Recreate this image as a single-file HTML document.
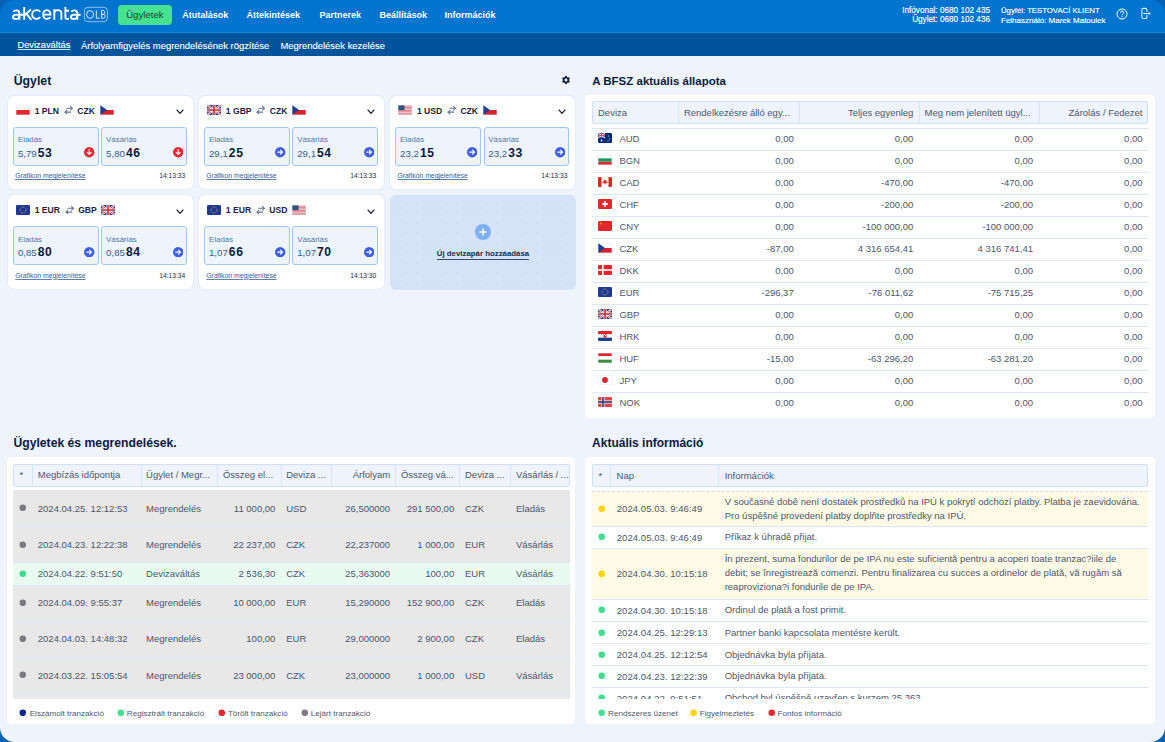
<!DOCTYPE html><html><head><meta charset="utf-8"><title>akcenta OLB</title><style>
*{box-sizing:border-box;margin:0;padding:0}
html,body{width:1165px;height:742px;overflow:hidden;background:#0663b4;font-family:"Liberation Sans", sans-serif;}
.page{position:absolute;left:0;top:0;width:1165px;height:742px;border-radius:14.5px;overflow:hidden;}
.t{position:absolute;white-space:nowrap;}
.card{position:absolute;background:#fff;border-radius:6px;box-shadow:0 0 1.5px rgba(110,140,190,0.28);}
.panel{position:absolute;background:#fff;border-radius:5px;}
</style></head><body><div class="page"><div class="t" style="left:0px;top:50px;width:1165px;height:692px;background:#eef3fc;"></div><div class="t" style="left:0px;top:0px;width:1165px;height:32.7px;background:#0074cf;"></div><div class="t" style="left:0px;top:31.7px;width:1165px;height:1px;background:#1681d6;"></div><div class="t" style="left:0px;top:32.7px;width:1165px;height:23px;background:#00549b;"></div><svg class="t" style="left:0;top:0" width="112" height="32" viewBox="0 0 112 32"><g fill="none" stroke="#fff" stroke-width="1.9"><path d="M13.4 11.8C14 10.8 15 10.4 16.3 10.4C18.4 10.4 19.4 11.4 19.4 13.3V19.8"/><path d="M24.2 14.7H16.2C14 14.7 13 15.6 13 16.9C13 18.2 14 18.9 15.7 18.9C17.9 18.9 19.4 17.6 19.4 15.4"/><path d="M24.2 7.1V19.8M24.6 15.2L31 9.5M26.6 13.9L31.3 19.8"/><path d="M40.2 12C39.4 10.8 38.1 10.1 36.5 10.1C33.9 10.1 32.2 12.1 32.2 14.5C32.2 16.9 33.9 18.9 36.5 18.9C38.1 18.9 39.4 18.2 40.2 17"/><path d="M43.2 14.6H50.5C50.5 12 48.9 10.1 46.8 10.1C44.6 10.1 43.2 12.1 43.2 14.5C43.2 16.9 44.7 18.9 47 18.9C48.5 18.9 49.6 18.3 50.3 17.2"/><path d="M54.3 19.8V9.3M54.3 13.4C54.3 11.4 55.6 10.1 57.5 10.1C59.6 10.1 61.4 11.2 61.4 13.6V19.8"/><path d="M65.4 7.1V17C65.4 18.5 66.2 18.9 67.3 18.9H69M64.5 10.8H69"/><path d="M71.3 11.8C71.9 10.8 72.9 10.4 74.2 10.4C76.3 10.4 77.3 11.4 77.3 13.3V19.8"/><path d="M80.6 14.7H74.1C71.9 14.7 70.9 15.6 70.9 16.9C70.9 18.2 71.9 18.9 73.6 18.9C75.8 18.9 77.3 17.6 77.3 15.4"/></g><rect x="84.4" y="7.3" width="23" height="14.4" rx="3.6" fill="none" stroke="rgba(255,255,255,0.55)" stroke-width="1"/><g fill="none" stroke="rgba(255,255,255,0.9)" stroke-width="0.95"><ellipse cx="90.1" cy="14.5" rx="3.5" ry="3.9"/><path d="M96.3 10.4V18.2H99.6"/><path d="M101.6 10.4V18.2H103.4C104.6 18.2 105.2 17.4 105.2 16.3C105.2 15.2 104.5 14.4 103.3 14.4H101.6M101.6 14.4H103C104 14.4 104.6 13.7 104.6 12.4C104.6 11.2 104 10.4 103 10.4H101.6"/></g></svg><div class="t" style="left:118px;top:5px;width:54px;height:20px;background:#47e28f;border-radius:4px;"></div><div class="t" style="left:126.2px;top:9.22px;font-size:9.6px;line-height:11.52px;color:#1a4236;">Ügyletek</div><div class="t" style="left:182.3px;top:9.69px;font-size:9px;line-height:10.8px;color:#fff;font-weight:bold;">Átutalások</div><div class="t" style="left:246.5px;top:9.69px;font-size:9px;line-height:10.8px;color:#fff;font-weight:bold;">Áttekintések</div><div class="t" style="left:319.4px;top:9.69px;font-size:9px;line-height:10.8px;color:#fff;font-weight:bold;">Partnerek</div><div class="t" style="left:379.6px;top:9.69px;font-size:9px;line-height:10.8px;color:#fff;font-weight:bold;">Beállítások</div><div class="t" style="left:444.4px;top:9.69px;font-size:9px;line-height:10.8px;color:#fff;font-weight:bold;">Információk</div><div class="t" style="left:590px;width:400px;text-align:right;top:5.54px;font-size:8.2px;line-height:9.84px;color:#fff;-webkit-text-stroke:0.15px #fff;">Infóvonal: 0680 102 435</div><div class="t" style="left:590px;width:400px;text-align:right;top:15.34px;font-size:8.2px;line-height:9.84px;color:#fff;-webkit-text-stroke:0.15px #fff;">Ügylet: 0680 102 436</div><div class="t" style="left:1001px;top:5.97px;font-size:7.75px;line-height:9.3px;color:#fff;-webkit-text-stroke:0.15px #fff;">Ügyfél: TESTOVACÍ KLIENT</div><div class="t" style="left:1001px;top:15.53px;font-size:8px;line-height:9.6px;color:#fff;-webkit-text-stroke:0.15px #fff;">Felhasználó: Marek Matoulek</div><svg class="t" style="left:1116px;top:8px" width="12" height="12" viewBox="0 0 12 12"><circle cx="6" cy="6" r="5" fill="none" stroke="#fff" stroke-width="1"/><path d="M4.4 4.7a1.6 1.6 0 1 1 2.3 1.4c-.5.3-.7.6-.7 1.1v.2" fill="none" stroke="#fff" stroke-width="1"/><circle cx="6" cy="8.7" r=".6" fill="#fff"/></svg><svg class="t" style="left:1140px;top:7px" width="13" height="13" viewBox="0 0 13 13"><path d="M6.9 5V2.9Q6.9 1.4 5.4 1.4H3.3Q1.8 1.4 1.8 2.9V10Q1.8 11.5 3.3 11.5H5.4Q6.9 11.5 6.9 10V8.1" fill="none" stroke="rgba(255,255,255,0.88)" stroke-width="1.1"/><path d="M3.4 6.5H9.6" stroke="rgba(255,255,255,0.9)" stroke-width="1.1"/><path d="M8.7 4.9L10.9 6.5L8.7 8.1Z" fill="#fff"/></svg><div class="t" style="left:17.4px;top:39.85px;font-size:9.35px;line-height:11.22px;color:#fff;text-decoration:underline;text-decoration-thickness:0.9px;text-decoration-color:rgba(255,255,255,0.8);text-underline-offset:0.6px;-webkit-text-stroke:0.12px #fff;">Devizaváltás</div><div class="t" style="left:81px;top:39.76px;font-size:9.45px;line-height:11.34px;color:#fff;-webkit-text-stroke:0.12px #fff;">Árfolyamfigyelés megrendelésének rögzítése</div><div class="t" style="left:280.5px;top:39.76px;font-size:9.45px;line-height:11.34px;color:#fff;-webkit-text-stroke:0.12px #fff;">Megrendelések kezelése</div><div class="t" style="left:13.7px;top:74.16px;font-size:12.3px;line-height:14.76px;color:#0d1a3b;font-weight:bold;">Ügylet</div><div class="t" style="left:592.2px;top:74.72px;font-size:11.5px;line-height:13.8px;color:#0d1a3b;font-weight:bold;">A BFSZ aktuális állapota</div><div class="t" style="left:13.4px;top:435.86px;font-size:12.2px;line-height:14.64px;color:#0d1a3b;font-weight:bold;">Ügyletek és megrendelések.</div><div class="t" style="left:592.1px;top:436.25px;font-size:12px;line-height:14.4px;color:#0d1a3b;font-weight:bold;">Aktuális információ</div><svg class="t" style="left:560.5px;top:75px" width="10" height="10" viewBox="0 0 24 24"><path fill="#0d1a3b" d="M19.14 12.94c.04-.3.06-.61.06-.94 0-.32-.02-.64-.07-.94l2.03-1.58a.49.49 0 0 0 .12-.61l-1.92-3.32a.488.488 0 0 0-.59-.22l-2.39.96c-.5-.38-1.03-.7-1.62-.94l-.36-2.54a.484.484 0 0 0-.48-.41h-3.84c-.24 0-.43.17-.47.41l-.36 2.54c-.59.24-1.130.57-1.62.94l-2.39-.96c-.22-.08-.47 0-.59.22L2.740 8.87c-.12.21-.08.47.12.61l2.03 1.58c-.05.3-.09.63-.09.94s.02.64.07.94l-2.03 1.58a.49.49 0 0 0-.12.61l1.92 3.32c.12.22.37.29.59.22l2.39-.96c.5.38 1.03.7 1.62.94l.36 2.54c.05.24.24.41.48.41h3.84c.24 0 .44-.17.47-.41l.36-2.54c.59-.24 1.13-.56 1.62-.94l2.39.96c.22.08.47 0 .59-.22l1.92-3.32c.12-.22.07-.47-.12-.61l-2.01-1.58zM12 15.6c-1.98 0-3.6-1.62-3.6-3.6s1.62-3.6 3.6-3.6 3.6 1.62 3.6 3.6-1.62 3.6-3.6 3.6z"/></svg><div class="card" style="left:8px;top:96px;width:184.6px;height:93px;"><div class="t" style="left:8px;top:9.2px;height:10px;display:flex;align-items:center;gap:4.6px;font-weight:bold;font-size:8.6px;color:#1b2440;line-height:10px;"><svg width="14" height="10" viewBox="0 0 14 10" style="display:block;flex:none;"><defs><clipPath id="fc1"><rect width="14" height="10" rx="1.3"/></clipPath></defs><g clip-path="url(#fc1)"><rect width="14" height="5" fill="#fff"/><rect y="5" width="14" height="5" fill="#e4262d"/></g><rect x=".25" y=".25" width="13.5" height="9.5" rx="1.2" fill="none" stroke="#d9e2ee" stroke-width=".5"/></svg><span style="margin-left:0.1px;position:relative;top:0.4px">1 PLN</span><svg width="9" height="10" viewBox="1 0 9 10" style="display:block;flex:none;margin-top:0.5px"><g fill="none" stroke="#6a7890" stroke-width="1.05" stroke-linecap="round" stroke-linejoin="round"><path d="M3.7 3.3H9.4M7.5 1.5L9.5 3.3L7.5 5.1"/><path d="M7.8 7.1H1.9M3.9 5.3L1.8 7.1L3.9 8.9"/></g></svg><span style="position:relative;top:0.4px">CZK</span><svg width="14" height="10" viewBox="0 0 14 10" style="display:block;flex:none;"><defs><clipPath id="fc2"><rect width="14" height="10" rx="1.3"/></clipPath></defs><g clip-path="url(#fc2)"><rect width="14" height="5" fill="#fff"/><rect y="5" width="14" height="5" fill="#d7232e"/><path d="M0 0L7 5L0 10Z" fill="#1c3f94"/></g><rect x=".25" y=".25" width="13.5" height="9.5" rx="1.2" fill="none" stroke="#d9e2ee" stroke-width=".5"/></svg></div><svg class="t" style="left:167.6px;top:13.3px" width="8" height="6" viewBox="0 0 8 6"><path d="M1 1L4 4.3L7 1" fill="none" stroke="#1b2233" stroke-width="1.15" stroke-linecap="round" stroke-linejoin="round"/></svg><div class="t" style="left:5.2px;top:31px;width:85.5px;height:39px;border:1px solid #9fc7f4;border-radius:3px;background:#eef4fd;"></div><div class="t" style="left:9.9px;top:39.33px;font-size:7.9px;line-height:9.48px;color:#5578a0;">Eladás</div><div class="t" style="left:9.9px;top:49.55px;line-height:14.52px;color:#3a5d8c;font-size:9.7px;">5,79<b style="font-size:12.1px;color:#0d1a3b;margin-left:1px;letter-spacing:0.6px;">53</b></div><svg class="t" style="left:76.4px;top:51.3px" width="10.4" height="10.4" viewBox="0 0 10.4 10.4"><circle cx="5.2" cy="5.2" r="5.2" fill="#e8262d"/><path d="M5.2 2.7V7.3M3.2 5.4L5.2 7.4L7.2 5.4" fill="none" stroke="#fff" stroke-width="1.15" stroke-linecap="round" stroke-linejoin="round"/></svg><div class="t" style="left:93.4px;top:31px;width:85.5px;height:39px;border:1px solid #9fc7f4;border-radius:3px;background:#eef4fd;"></div><div class="t" style="left:98.1px;top:39.33px;font-size:7.9px;line-height:9.48px;color:#5578a0;">Vásárlás</div><div class="t" style="left:98.1px;top:49.55px;line-height:14.52px;color:#3a5d8c;font-size:9.7px;">5,80<b style="font-size:12.1px;color:#0d1a3b;margin-left:1px;letter-spacing:0.6px;">46</b></div><svg class="t" style="left:164.6px;top:51.3px" width="10.4" height="10.4" viewBox="0 0 10.4 10.4"><circle cx="5.2" cy="5.2" r="5.2" fill="#e8262d"/><path d="M5.2 2.7V7.3M3.2 5.4L5.2 7.4L7.2 5.4" fill="none" stroke="#fff" stroke-width="1.15" stroke-linecap="round" stroke-linejoin="round"/></svg><div class="t" style="left:7.2px;top:76.22px;font-size:6.85px;line-height:8.22px;color:#35608f;text-decoration:underline;text-decoration-color:#5f82ab;text-underline-offset:0.5px;">Grafikon megjelenítése</div><div class="t" style="left:-222.8px;width:400px;text-align:right;top:76.36px;font-size:6.7px;line-height:8.04px;color:#232c3a;">14:13:33</div></div><div class="card" style="left:199.1px;top:96px;width:184.6px;height:93px;"><div class="t" style="left:8px;top:9.2px;height:10px;display:flex;align-items:center;gap:4.6px;font-weight:bold;font-size:8.6px;color:#1b2440;line-height:10px;"><svg width="14" height="10" viewBox="0 0 14 10" style="display:block;flex:none;"><defs><clipPath id="fc3"><rect width="14" height="10" rx="1.3"/></clipPath></defs><g clip-path="url(#fc3)"><rect width="14" height="10" fill="#283c8c"/><path d="M0 0L14 10M14 0L0 10" stroke="#fff" stroke-width="2"/><path d="M0 0L14 10M14 0L0 10" stroke="#d22630" stroke-width=".8"/><path d="M7 0V10M0 5H14" stroke="#fff" stroke-width="3"/><path d="M7 0V10M0 5H14" stroke="#d22630" stroke-width="1.6"/></g></svg><span style="margin-left:0.1px;position:relative;top:0.4px">1 GBP</span><svg width="9" height="10" viewBox="1 0 9 10" style="display:block;flex:none;margin-top:0.5px"><g fill="none" stroke="#6a7890" stroke-width="1.05" stroke-linecap="round" stroke-linejoin="round"><path d="M3.7 3.3H9.4M7.5 1.5L9.5 3.3L7.5 5.1"/><path d="M7.8 7.1H1.9M3.9 5.3L1.8 7.1L3.9 8.9"/></g></svg><span style="position:relative;top:0.4px">CZK</span><svg width="14" height="10" viewBox="0 0 14 10" style="display:block;flex:none;"><defs><clipPath id="fc4"><rect width="14" height="10" rx="1.3"/></clipPath></defs><g clip-path="url(#fc4)"><rect width="14" height="5" fill="#fff"/><rect y="5" width="14" height="5" fill="#d7232e"/><path d="M0 0L7 5L0 10Z" fill="#1c3f94"/></g><rect x=".25" y=".25" width="13.5" height="9.5" rx="1.2" fill="none" stroke="#d9e2ee" stroke-width=".5"/></svg></div><svg class="t" style="left:167.6px;top:13.3px" width="8" height="6" viewBox="0 0 8 6"><path d="M1 1L4 4.3L7 1" fill="none" stroke="#1b2233" stroke-width="1.15" stroke-linecap="round" stroke-linejoin="round"/></svg><div class="t" style="left:5.2px;top:31px;width:85.5px;height:39px;border:1px solid #9fc7f4;border-radius:3px;background:#eef4fd;"></div><div class="t" style="left:9.9px;top:39.33px;font-size:7.9px;line-height:9.48px;color:#5578a0;">Eladás</div><div class="t" style="left:9.9px;top:49.55px;line-height:14.52px;color:#3a5d8c;font-size:9.7px;">29,1<b style="font-size:12.1px;color:#0d1a3b;margin-left:1px;letter-spacing:0.6px;">25</b></div><svg class="t" style="left:76.4px;top:51.3px" width="10.4" height="10.4" viewBox="0 0 10.4 10.4"><circle cx="5.2" cy="5.2" r="5.2" fill="#3f5fe2"/><path d="M2.8 5.2H7.4M5.5 3.2L7.5 5.2L5.5 7.2" fill="none" stroke="#fff" stroke-width="1.15" stroke-linecap="round" stroke-linejoin="round"/></svg><div class="t" style="left:93.4px;top:31px;width:85.5px;height:39px;border:1px solid #9fc7f4;border-radius:3px;background:#eef4fd;"></div><div class="t" style="left:98.1px;top:39.33px;font-size:7.9px;line-height:9.48px;color:#5578a0;">Vásárlás</div><div class="t" style="left:98.1px;top:49.55px;line-height:14.52px;color:#3a5d8c;font-size:9.7px;">29,1<b style="font-size:12.1px;color:#0d1a3b;margin-left:1px;letter-spacing:0.6px;">54</b></div><svg class="t" style="left:164.6px;top:51.3px" width="10.4" height="10.4" viewBox="0 0 10.4 10.4"><circle cx="5.2" cy="5.2" r="5.2" fill="#3f5fe2"/><path d="M2.8 5.2H7.4M5.5 3.2L7.5 5.2L5.5 7.2" fill="none" stroke="#fff" stroke-width="1.15" stroke-linecap="round" stroke-linejoin="round"/></svg><div class="t" style="left:7.2px;top:76.22px;font-size:6.85px;line-height:8.22px;color:#35608f;text-decoration:underline;text-decoration-color:#5f82ab;text-underline-offset:0.5px;">Grafikon megjelenítése</div><div class="t" style="left:-222.8px;width:400px;text-align:right;top:76.36px;font-size:6.7px;line-height:8.04px;color:#232c3a;">14:13:33</div></div><div class="card" style="left:390.2px;top:96px;width:184.6px;height:93px;"><div class="t" style="left:8px;top:9.2px;height:10px;display:flex;align-items:center;gap:4.6px;font-weight:bold;font-size:8.6px;color:#1b2440;line-height:10px;"><svg width="14" height="10" viewBox="0 0 14 10" style="display:block;flex:none;"><defs><clipPath id="fc5"><rect width="14" height="10" rx="1.3"/></clipPath></defs><g clip-path="url(#fc5)"><rect width="14" height="10" fill="#f7dfe2"/><rect y="0.7" width="14" height=".75" fill="#d46a72"/><rect y="2.13" width="14" height=".75" fill="#d46a72"/><rect y="3.56" width="14" height=".75" fill="#d46a72"/><rect y="4.99" width="14" height=".75" fill="#d46a72"/><rect y="6.42" width="14" height=".75" fill="#d46a72"/><rect y="7.85" width="14" height=".75" fill="#d46a72"/><rect y="9.28" width="14" height=".75" fill="#d46a72"/><rect width="6.5" height="5.2" fill="#33507f"/></g><rect x=".25" y=".25" width="13.5" height="9.5" rx="1.2" fill="none" stroke="#d9e2ee" stroke-width=".5"/></svg><span style="margin-left:0.1px;position:relative;top:0.4px">1 USD</span><svg width="9" height="10" viewBox="1 0 9 10" style="display:block;flex:none;margin-top:0.5px"><g fill="none" stroke="#6a7890" stroke-width="1.05" stroke-linecap="round" stroke-linejoin="round"><path d="M3.7 3.3H9.4M7.5 1.5L9.5 3.3L7.5 5.1"/><path d="M7.8 7.1H1.9M3.9 5.3L1.8 7.1L3.9 8.9"/></g></svg><span style="position:relative;top:0.4px">CZK</span><svg width="14" height="10" viewBox="0 0 14 10" style="display:block;flex:none;"><defs><clipPath id="fc6"><rect width="14" height="10" rx="1.3"/></clipPath></defs><g clip-path="url(#fc6)"><rect width="14" height="5" fill="#fff"/><rect y="5" width="14" height="5" fill="#d7232e"/><path d="M0 0L7 5L0 10Z" fill="#1c3f94"/></g><rect x=".25" y=".25" width="13.5" height="9.5" rx="1.2" fill="none" stroke="#d9e2ee" stroke-width=".5"/></svg></div><svg class="t" style="left:167.6px;top:13.3px" width="8" height="6" viewBox="0 0 8 6"><path d="M1 1L4 4.3L7 1" fill="none" stroke="#1b2233" stroke-width="1.15" stroke-linecap="round" stroke-linejoin="round"/></svg><div class="t" style="left:5.2px;top:31px;width:85.5px;height:39px;border:1px solid #9fc7f4;border-radius:3px;background:#eef4fd;"></div><div class="t" style="left:9.9px;top:39.33px;font-size:7.9px;line-height:9.48px;color:#5578a0;">Eladás</div><div class="t" style="left:9.9px;top:49.55px;line-height:14.52px;color:#3a5d8c;font-size:9.7px;">23,2<b style="font-size:12.1px;color:#0d1a3b;margin-left:1px;letter-spacing:0.6px;">15</b></div><svg class="t" style="left:76.4px;top:51.3px" width="10.4" height="10.4" viewBox="0 0 10.4 10.4"><circle cx="5.2" cy="5.2" r="5.2" fill="#3f5fe2"/><path d="M2.8 5.2H7.4M5.5 3.2L7.5 5.2L5.5 7.2" fill="none" stroke="#fff" stroke-width="1.15" stroke-linecap="round" stroke-linejoin="round"/></svg><div class="t" style="left:93.4px;top:31px;width:85.5px;height:39px;border:1px solid #9fc7f4;border-radius:3px;background:#eef4fd;"></div><div class="t" style="left:98.1px;top:39.33px;font-size:7.9px;line-height:9.48px;color:#5578a0;">Vásárlás</div><div class="t" style="left:98.1px;top:49.55px;line-height:14.52px;color:#3a5d8c;font-size:9.7px;">23,2<b style="font-size:12.1px;color:#0d1a3b;margin-left:1px;letter-spacing:0.6px;">33</b></div><svg class="t" style="left:164.6px;top:51.3px" width="10.4" height="10.4" viewBox="0 0 10.4 10.4"><circle cx="5.2" cy="5.2" r="5.2" fill="#3f5fe2"/><path d="M2.8 5.2H7.4M5.5 3.2L7.5 5.2L5.5 7.2" fill="none" stroke="#fff" stroke-width="1.15" stroke-linecap="round" stroke-linejoin="round"/></svg><div class="t" style="left:7.2px;top:76.22px;font-size:6.85px;line-height:8.22px;color:#35608f;text-decoration:underline;text-decoration-color:#5f82ab;text-underline-offset:0.5px;">Grafikon megjelenítése</div><div class="t" style="left:-222.8px;width:400px;text-align:right;top:76.36px;font-size:6.7px;line-height:8.04px;color:#232c3a;">14:13:33</div></div><div class="card" style="left:8px;top:195.4px;width:184.6px;height:93.6px;"><div class="t" style="left:8px;top:9.2px;height:10px;display:flex;align-items:center;gap:4.6px;font-weight:bold;font-size:8.6px;color:#1b2440;line-height:10px;"><svg width="14" height="10" viewBox="0 0 14 10" style="display:block;flex:none;"><defs><clipPath id="fc7"><rect width="14" height="10" rx="1.3"/></clipPath></defs><g clip-path="url(#fc7)"><rect width="14" height="10" fill="#1d3993"/><circle cx="7" cy="5" r="3" fill="none" stroke="#d9a54a" stroke-width=".9" stroke-dasharray=".8 .77"/></g></svg><span style="margin-left:0.1px;position:relative;top:0.4px">1 EUR</span><svg width="9" height="10" viewBox="1 0 9 10" style="display:block;flex:none;margin-top:0.5px"><g fill="none" stroke="#6a7890" stroke-width="1.05" stroke-linecap="round" stroke-linejoin="round"><path d="M3.7 3.3H9.4M7.5 1.5L9.5 3.3L7.5 5.1"/><path d="M7.8 7.1H1.9M3.9 5.3L1.8 7.1L3.9 8.9"/></g></svg><span style="position:relative;top:0.4px">GBP</span><svg width="14" height="10" viewBox="0 0 14 10" style="display:block;flex:none;"><defs><clipPath id="fc8"><rect width="14" height="10" rx="1.3"/></clipPath></defs><g clip-path="url(#fc8)"><rect width="14" height="10" fill="#283c8c"/><path d="M0 0L14 10M14 0L0 10" stroke="#fff" stroke-width="2"/><path d="M0 0L14 10M14 0L0 10" stroke="#d22630" stroke-width=".8"/><path d="M7 0V10M0 5H14" stroke="#fff" stroke-width="3"/><path d="M7 0V10M0 5H14" stroke="#d22630" stroke-width="1.6"/></g></svg></div><svg class="t" style="left:167.6px;top:13.3px" width="8" height="6" viewBox="0 0 8 6"><path d="M1 1L4 4.3L7 1" fill="none" stroke="#1b2233" stroke-width="1.15" stroke-linecap="round" stroke-linejoin="round"/></svg><div class="t" style="left:5.2px;top:31px;width:85.5px;height:39px;border:1px solid #9fc7f4;border-radius:3px;background:#eef4fd;"></div><div class="t" style="left:9.9px;top:39.33px;font-size:7.9px;line-height:9.48px;color:#5578a0;">Eladás</div><div class="t" style="left:9.9px;top:49.55px;line-height:14.52px;color:#3a5d8c;font-size:9.7px;">0,85<b style="font-size:12.1px;color:#0d1a3b;margin-left:1px;letter-spacing:0.6px;">80</b></div><svg class="t" style="left:76.4px;top:51.3px" width="10.4" height="10.4" viewBox="0 0 10.4 10.4"><circle cx="5.2" cy="5.2" r="5.2" fill="#3f5fe2"/><path d="M2.8 5.2H7.4M5.5 3.2L7.5 5.2L5.5 7.2" fill="none" stroke="#fff" stroke-width="1.15" stroke-linecap="round" stroke-linejoin="round"/></svg><div class="t" style="left:93.4px;top:31px;width:85.5px;height:39px;border:1px solid #9fc7f4;border-radius:3px;background:#eef4fd;"></div><div class="t" style="left:98.1px;top:39.33px;font-size:7.9px;line-height:9.48px;color:#5578a0;">Vásárlás</div><div class="t" style="left:98.1px;top:49.55px;line-height:14.52px;color:#3a5d8c;font-size:9.7px;">0,85<b style="font-size:12.1px;color:#0d1a3b;margin-left:1px;letter-spacing:0.6px;">84</b></div><svg class="t" style="left:164.6px;top:51.3px" width="10.4" height="10.4" viewBox="0 0 10.4 10.4"><circle cx="5.2" cy="5.2" r="5.2" fill="#3f5fe2"/><path d="M2.8 5.2H7.4M5.5 3.2L7.5 5.2L5.5 7.2" fill="none" stroke="#fff" stroke-width="1.15" stroke-linecap="round" stroke-linejoin="round"/></svg><div class="t" style="left:7.2px;top:76.22px;font-size:6.85px;line-height:8.22px;color:#35608f;text-decoration:underline;text-decoration-color:#5f82ab;text-underline-offset:0.5px;">Grafikon megjelenítése</div><div class="t" style="left:-222.8px;width:400px;text-align:right;top:76.36px;font-size:6.7px;line-height:8.04px;color:#232c3a;">14:13:34</div></div><div class="card" style="left:199.1px;top:195.4px;width:184.6px;height:93.6px;"><div class="t" style="left:8px;top:9.2px;height:10px;display:flex;align-items:center;gap:4.6px;font-weight:bold;font-size:8.6px;color:#1b2440;line-height:10px;"><svg width="14" height="10" viewBox="0 0 14 10" style="display:block;flex:none;"><defs><clipPath id="fc9"><rect width="14" height="10" rx="1.3"/></clipPath></defs><g clip-path="url(#fc9)"><rect width="14" height="10" fill="#1d3993"/><circle cx="7" cy="5" r="3" fill="none" stroke="#d9a54a" stroke-width=".9" stroke-dasharray=".8 .77"/></g></svg><span style="margin-left:0.1px;position:relative;top:0.4px">1 EUR</span><svg width="9" height="10" viewBox="1 0 9 10" style="display:block;flex:none;margin-top:0.5px"><g fill="none" stroke="#6a7890" stroke-width="1.05" stroke-linecap="round" stroke-linejoin="round"><path d="M3.7 3.3H9.4M7.5 1.5L9.5 3.3L7.5 5.1"/><path d="M7.8 7.1H1.9M3.9 5.3L1.8 7.1L3.9 8.9"/></g></svg><span style="position:relative;top:0.4px">USD</span><svg width="14" height="10" viewBox="0 0 14 10" style="display:block;flex:none;"><defs><clipPath id="fc10"><rect width="14" height="10" rx="1.3"/></clipPath></defs><g clip-path="url(#fc10)"><rect width="14" height="10" fill="#f7dfe2"/><rect y="0.7" width="14" height=".75" fill="#d46a72"/><rect y="2.13" width="14" height=".75" fill="#d46a72"/><rect y="3.56" width="14" height=".75" fill="#d46a72"/><rect y="4.99" width="14" height=".75" fill="#d46a72"/><rect y="6.42" width="14" height=".75" fill="#d46a72"/><rect y="7.85" width="14" height=".75" fill="#d46a72"/><rect y="9.28" width="14" height=".75" fill="#d46a72"/><rect width="6.5" height="5.2" fill="#33507f"/></g><rect x=".25" y=".25" width="13.5" height="9.5" rx="1.2" fill="none" stroke="#d9e2ee" stroke-width=".5"/></svg></div><svg class="t" style="left:167.6px;top:13.3px" width="8" height="6" viewBox="0 0 8 6"><path d="M1 1L4 4.3L7 1" fill="none" stroke="#1b2233" stroke-width="1.15" stroke-linecap="round" stroke-linejoin="round"/></svg><div class="t" style="left:5.2px;top:31px;width:85.5px;height:39px;border:1px solid #9fc7f4;border-radius:3px;background:#eef4fd;"></div><div class="t" style="left:9.9px;top:39.33px;font-size:7.9px;line-height:9.48px;color:#5578a0;">Eladás</div><div class="t" style="left:9.9px;top:49.55px;line-height:14.52px;color:#3a5d8c;font-size:9.7px;">1,07<b style="font-size:12.1px;color:#0d1a3b;margin-left:1px;letter-spacing:0.6px;">66</b></div><svg class="t" style="left:76.4px;top:51.3px" width="10.4" height="10.4" viewBox="0 0 10.4 10.4"><circle cx="5.2" cy="5.2" r="5.2" fill="#3f5fe2"/><path d="M2.8 5.2H7.4M5.5 3.2L7.5 5.2L5.5 7.2" fill="none" stroke="#fff" stroke-width="1.15" stroke-linecap="round" stroke-linejoin="round"/></svg><div class="t" style="left:93.4px;top:31px;width:85.5px;height:39px;border:1px solid #9fc7f4;border-radius:3px;background:#eef4fd;"></div><div class="t" style="left:98.1px;top:39.33px;font-size:7.9px;line-height:9.48px;color:#5578a0;">Vásárlás</div><div class="t" style="left:98.1px;top:49.55px;line-height:14.52px;color:#3a5d8c;font-size:9.7px;">1,07<b style="font-size:12.1px;color:#0d1a3b;margin-left:1px;letter-spacing:0.6px;">70</b></div><svg class="t" style="left:164.6px;top:51.3px" width="10.4" height="10.4" viewBox="0 0 10.4 10.4"><circle cx="5.2" cy="5.2" r="5.2" fill="#3f5fe2"/><path d="M2.8 5.2H7.4M5.5 3.2L7.5 5.2L5.5 7.2" fill="none" stroke="#fff" stroke-width="1.15" stroke-linecap="round" stroke-linejoin="round"/></svg><div class="t" style="left:7.2px;top:76.22px;font-size:6.85px;line-height:8.22px;color:#35608f;text-decoration:underline;text-decoration-color:#5f82ab;text-underline-offset:0.5px;">Grafikon megjelenítése</div><div class="t" style="left:-222.8px;width:400px;text-align:right;top:76.36px;font-size:6.7px;line-height:8.04px;color:#232c3a;">14:13:30</div></div><div class="card" style="left:390.2px;top:195.2px;width:185.5px;height:94.4px;background-color:#d5e3f9;background-image:radial-gradient(circle, rgba(150,175,215,0.14) 0.6px, transparent 0.9px);background-size:10px 10px;background-position:2px 3px;box-shadow:none;"><svg class="t" style="left:84.5px;top:28.6px" width="16" height="16" viewBox="0 0 16 16"><circle cx="8" cy="8" r="8" fill="#7db0f1"/><path d="M8 4.4V11.6M4.4 8H11.6" stroke="#fff" stroke-width="1.5"/></svg><div class="t" style="left:46.6px;top:53.57px;font-size:7.85px;line-height:9.42px;color:#222d48;font-weight:bold;letter-spacing:0px;">Új devizapár hozzáadása</div><div class="t" style="left:46.6px;top:63.6px;width:92.4px;height:1px;background:#3b4a66;"></div></div><div class="panel" style="left:585.3px;top:95.2px;width:569.4px;height:322.5px;"><div class="t" style="left:6.7px;top:6.3px;width:556.3px;height:23px;background:#eef3fd;border:1px solid #cfe0f8;border-radius:2px;"></div><div class="t" style="left:92.6px;top:7.3px;width:1px;height:21px;background:#d6e4f8;"></div><div class="t" style="left:214.1px;top:7.3px;width:1px;height:21px;background:#d6e4f8;"></div><div class="t" style="left:333.7px;top:7.3px;width:1px;height:21px;background:#d6e4f8;"></div><div class="t" style="left:453.5px;top:7.3px;width:1px;height:21px;background:#d6e4f8;"></div><div class="t" style="left:12.7px;top:12.11px;font-size:9.5px;line-height:11.4px;color:#4a576b;">Deviza</div><div class="t" style="left:98.6px;top:12.11px;font-size:9.5px;line-height:11.4px;color:#4a576b;">Rendelkezésre álló egy...</div><div class="t" style="left:-71.9px;width:400px;text-align:right;top:12.11px;font-size:9.5px;line-height:11.4px;color:#4a576b;">Teljes egyenleg</div><div class="t" style="left:339.2px;top:12.11px;font-size:9.5px;line-height:11.4px;color:#4a576b;">Meg nem jelenített ügyl...</div><div class="t" style="left:157.2px;width:400px;text-align:right;top:12.11px;font-size:9.5px;line-height:11.4px;color:#4a576b;">Zárolás / Fedezet</div><div class="t" style="left:6.7px;top:32.5px;width:556.3px;height:1px;background:#dce7f8;"></div><div class="t" style="left:12.7px;top:38px;"><svg width="14" height="10" viewBox="0 0 14 10" style="display:block;flex:none;"><defs><clipPath id="fc11"><rect width="14" height="10" rx="1.3"/></clipPath></defs><g clip-path="url(#fc11)"><rect width="14" height="10" fill="#0a2a7a"/><path d="M0 0L7 5M7 0L0 5" stroke="#fff" stroke-width="1"/><path d="M3.5 0V5M0 2.5H7" stroke="#fff" stroke-width="1.5"/><path d="M3.5 0V5M0 2.5H7" stroke="#d22630" stroke-width=".8"/><circle cx="3.5" cy="7.5" r=".9" fill="#fff"/><circle cx="10.5" cy="3" r=".5" fill="#fff"/><circle cx="11.5" cy="6" r=".5" fill="#fff"/><circle cx="10" cy="8" r=".5" fill="#fff"/></g></svg></div><div class="t" style="left:34.1px;top:37.81px;font-size:9.5px;line-height:11.4px;color:#4a576b;">AUD</div><div class="t" style="left:-191.6px;width:400px;text-align:right;top:37.81px;font-size:9.5px;line-height:11.4px;color:#4a576b;">0,00</div><div class="t" style="left:-72px;width:400px;text-align:right;top:37.81px;font-size:9.5px;line-height:11.4px;color:#4a576b;">0,00</div><div class="t" style="left:47.8px;width:400px;text-align:right;top:37.81px;font-size:9.5px;line-height:11.4px;color:#4a576b;">0,00</div><div class="t" style="left:157.3px;width:400px;text-align:right;top:37.81px;font-size:9.5px;line-height:11.4px;color:#4a576b;">0,00</div><div class="t" style="left:6.7px;top:54.52px;width:556.3px;height:1px;background:#dce7f8;"></div><div class="t" style="left:12.7px;top:60.02px;"><svg width="14" height="10" viewBox="0 0 14 10" style="display:block;flex:none;"><defs><clipPath id="fc12"><rect width="14" height="10" rx="1.3"/></clipPath></defs><g clip-path="url(#fc12)"><rect width="14" height="3.33" fill="#fff"/><rect y="3.33" width="14" height="3.34" fill="#1a9a6a"/><rect y="6.67" width="14" height="3.33" fill="#d62d2d"/></g><rect x=".25" y=".25" width="13.5" height="9.5" rx="1.2" fill="none" stroke="#d9e2ee" stroke-width=".5"/></svg></div><div class="t" style="left:34.1px;top:59.83px;font-size:9.5px;line-height:11.4px;color:#4a576b;">BGN</div><div class="t" style="left:-191.6px;width:400px;text-align:right;top:59.83px;font-size:9.5px;line-height:11.4px;color:#4a576b;">0,00</div><div class="t" style="left:-72px;width:400px;text-align:right;top:59.83px;font-size:9.5px;line-height:11.4px;color:#4a576b;">0,00</div><div class="t" style="left:47.8px;width:400px;text-align:right;top:59.83px;font-size:9.5px;line-height:11.4px;color:#4a576b;">0,00</div><div class="t" style="left:157.3px;width:400px;text-align:right;top:59.83px;font-size:9.5px;line-height:11.4px;color:#4a576b;">0,00</div><div class="t" style="left:6.7px;top:76.54px;width:556.3px;height:1px;background:#dce7f8;"></div><div class="t" style="left:12.7px;top:82.04px;"><svg width="14" height="10" viewBox="0 0 14 10" style="display:block;flex:none;"><defs><clipPath id="fc13"><rect width="14" height="10" rx="1.3"/></clipPath></defs><g clip-path="url(#fc13)"><rect width="14" height="10" fill="#fff"/><rect width="3.5" height="10" fill="#d52b1e"/><rect x="10.5" width="3.5" height="10" fill="#d52b1e"/><path d="M7 2.2L7.7 3.6L8.6 3.2L8.3 5.3L9.4 4.6L9.6 5.4L8.6 6.4L7.2 6.3V7.8H6.8V6.3L5.4 6.4L4.4 5.4L4.6 4.6L5.7 5.3L5.4 3.2L6.3 3.6Z" fill="#d52b1e"/></g></svg></div><div class="t" style="left:34.1px;top:81.85px;font-size:9.5px;line-height:11.4px;color:#4a576b;">CAD</div><div class="t" style="left:-191.6px;width:400px;text-align:right;top:81.85px;font-size:9.5px;line-height:11.4px;color:#4a576b;">0,00</div><div class="t" style="left:-72px;width:400px;text-align:right;top:81.85px;font-size:9.5px;line-height:11.4px;color:#4a576b;">-470,00</div><div class="t" style="left:47.8px;width:400px;text-align:right;top:81.85px;font-size:9.5px;line-height:11.4px;color:#4a576b;">-470,00</div><div class="t" style="left:157.3px;width:400px;text-align:right;top:81.85px;font-size:9.5px;line-height:11.4px;color:#4a576b;">0,00</div><div class="t" style="left:6.7px;top:98.56px;width:556.3px;height:1px;background:#dce7f8;"></div><div class="t" style="left:12.7px;top:104.06px;"><svg width="14" height="10" viewBox="0 0 14 10" style="display:block;flex:none;"><defs><clipPath id="fc14"><rect width="14" height="10" rx="1.3"/></clipPath></defs><g clip-path="url(#fc14)"><rect width="14" height="10" fill="#e4262d"/><path d="M6.1 2.3H7.9V4.1H9.7V5.9H7.9V7.7H6.1V5.9H4.3V4.1H6.1Z" fill="#fff"/></g></svg></div><div class="t" style="left:34.1px;top:103.87px;font-size:9.5px;line-height:11.4px;color:#4a576b;">CHF</div><div class="t" style="left:-191.6px;width:400px;text-align:right;top:103.87px;font-size:9.5px;line-height:11.4px;color:#4a576b;">0,00</div><div class="t" style="left:-72px;width:400px;text-align:right;top:103.87px;font-size:9.5px;line-height:11.4px;color:#4a576b;">-200,00</div><div class="t" style="left:47.8px;width:400px;text-align:right;top:103.87px;font-size:9.5px;line-height:11.4px;color:#4a576b;">-200,00</div><div class="t" style="left:157.3px;width:400px;text-align:right;top:103.87px;font-size:9.5px;line-height:11.4px;color:#4a576b;">0,00</div><div class="t" style="left:6.7px;top:120.58px;width:556.3px;height:1px;background:#dce7f8;"></div><div class="t" style="left:12.7px;top:126.08px;"><svg width="14" height="10" viewBox="0 0 14 10" style="display:block;flex:none;"><defs><clipPath id="fc15"><rect width="14" height="10" rx="1.3"/></clipPath></defs><g clip-path="url(#fc15)"><rect width="14" height="10" fill="#e3262a"/><circle cx="2.8" cy="2.6" r="1.1" fill="#f6c600" opacity=".6"/></g></svg></div><div class="t" style="left:34.1px;top:125.89px;font-size:9.5px;line-height:11.4px;color:#4a576b;">CNY</div><div class="t" style="left:-191.6px;width:400px;text-align:right;top:125.89px;font-size:9.5px;line-height:11.4px;color:#4a576b;">0,00</div><div class="t" style="left:-72px;width:400px;text-align:right;top:125.89px;font-size:9.5px;line-height:11.4px;color:#4a576b;">-100 000,00</div><div class="t" style="left:47.8px;width:400px;text-align:right;top:125.89px;font-size:9.5px;line-height:11.4px;color:#4a576b;">-100 000,00</div><div class="t" style="left:157.3px;width:400px;text-align:right;top:125.89px;font-size:9.5px;line-height:11.4px;color:#4a576b;">0,00</div><div class="t" style="left:6.7px;top:142.6px;width:556.3px;height:1px;background:#dce7f8;"></div><div class="t" style="left:12.7px;top:148.1px;"><svg width="14" height="10" viewBox="0 0 14 10" style="display:block;flex:none;"><defs><clipPath id="fc16"><rect width="14" height="10" rx="1.3"/></clipPath></defs><g clip-path="url(#fc16)"><rect width="14" height="5" fill="#fff"/><rect y="5" width="14" height="5" fill="#d7232e"/><path d="M0 0L7 5L0 10Z" fill="#1c3f94"/></g><rect x=".25" y=".25" width="13.5" height="9.5" rx="1.2" fill="none" stroke="#d9e2ee" stroke-width=".5"/></svg></div><div class="t" style="left:34.1px;top:147.91px;font-size:9.5px;line-height:11.4px;color:#4a576b;">CZK</div><div class="t" style="left:-191.6px;width:400px;text-align:right;top:147.91px;font-size:9.5px;line-height:11.4px;color:#4a576b;">-87,00</div><div class="t" style="left:-72px;width:400px;text-align:right;top:147.91px;font-size:9.5px;line-height:11.4px;color:#4a576b;">4 316 654,41</div><div class="t" style="left:47.8px;width:400px;text-align:right;top:147.91px;font-size:9.5px;line-height:11.4px;color:#4a576b;">4 316 741,41</div><div class="t" style="left:157.3px;width:400px;text-align:right;top:147.91px;font-size:9.5px;line-height:11.4px;color:#4a576b;">0,00</div><div class="t" style="left:6.7px;top:164.62px;width:556.3px;height:1px;background:#dce7f8;"></div><div class="t" style="left:12.7px;top:170.12px;"><svg width="14" height="10" viewBox="0 0 14 10" style="display:block;flex:none;"><defs><clipPath id="fc17"><rect width="14" height="10" rx="1.3"/></clipPath></defs><g clip-path="url(#fc17)"><rect width="14" height="10" fill="#e4262d"/><rect x="4" width="1.6" height="10" fill="#fff"/><rect y="4.2" width="14" height="1.6" fill="#fff"/></g></svg></div><div class="t" style="left:34.1px;top:169.93px;font-size:9.5px;line-height:11.4px;color:#4a576b;">DKK</div><div class="t" style="left:-191.6px;width:400px;text-align:right;top:169.93px;font-size:9.5px;line-height:11.4px;color:#4a576b;">0,00</div><div class="t" style="left:-72px;width:400px;text-align:right;top:169.93px;font-size:9.5px;line-height:11.4px;color:#4a576b;">0,00</div><div class="t" style="left:47.8px;width:400px;text-align:right;top:169.93px;font-size:9.5px;line-height:11.4px;color:#4a576b;">0,00</div><div class="t" style="left:157.3px;width:400px;text-align:right;top:169.93px;font-size:9.5px;line-height:11.4px;color:#4a576b;">0,00</div><div class="t" style="left:6.7px;top:186.64px;width:556.3px;height:1px;background:#dce7f8;"></div><div class="t" style="left:12.7px;top:192.14px;"><svg width="14" height="10" viewBox="0 0 14 10" style="display:block;flex:none;"><defs><clipPath id="fc18"><rect width="14" height="10" rx="1.3"/></clipPath></defs><g clip-path="url(#fc18)"><rect width="14" height="10" fill="#1d3993"/><circle cx="7" cy="5" r="3" fill="none" stroke="#d9a54a" stroke-width=".9" stroke-dasharray=".8 .77"/></g></svg></div><div class="t" style="left:34.1px;top:191.95px;font-size:9.5px;line-height:11.4px;color:#4a576b;">EUR</div><div class="t" style="left:-191.6px;width:400px;text-align:right;top:191.95px;font-size:9.5px;line-height:11.4px;color:#4a576b;">-296,37</div><div class="t" style="left:-72px;width:400px;text-align:right;top:191.95px;font-size:9.5px;line-height:11.4px;color:#4a576b;">-76 011,62</div><div class="t" style="left:47.8px;width:400px;text-align:right;top:191.95px;font-size:9.5px;line-height:11.4px;color:#4a576b;">-75 715,25</div><div class="t" style="left:157.3px;width:400px;text-align:right;top:191.95px;font-size:9.5px;line-height:11.4px;color:#4a576b;">0,00</div><div class="t" style="left:6.7px;top:208.66px;width:556.3px;height:1px;background:#dce7f8;"></div><div class="t" style="left:12.7px;top:214.16px;"><svg width="14" height="10" viewBox="0 0 14 10" style="display:block;flex:none;"><defs><clipPath id="fc19"><rect width="14" height="10" rx="1.3"/></clipPath></defs><g clip-path="url(#fc19)"><rect width="14" height="10" fill="#283c8c"/><path d="M0 0L14 10M14 0L0 10" stroke="#fff" stroke-width="2"/><path d="M0 0L14 10M14 0L0 10" stroke="#d22630" stroke-width=".8"/><path d="M7 0V10M0 5H14" stroke="#fff" stroke-width="3"/><path d="M7 0V10M0 5H14" stroke="#d22630" stroke-width="1.6"/></g></svg></div><div class="t" style="left:34.1px;top:213.97px;font-size:9.5px;line-height:11.4px;color:#4a576b;">GBP</div><div class="t" style="left:-191.6px;width:400px;text-align:right;top:213.97px;font-size:9.5px;line-height:11.4px;color:#4a576b;">0,00</div><div class="t" style="left:-72px;width:400px;text-align:right;top:213.97px;font-size:9.5px;line-height:11.4px;color:#4a576b;">0,00</div><div class="t" style="left:47.8px;width:400px;text-align:right;top:213.97px;font-size:9.5px;line-height:11.4px;color:#4a576b;">0,00</div><div class="t" style="left:157.3px;width:400px;text-align:right;top:213.97px;font-size:9.5px;line-height:11.4px;color:#4a576b;">0,00</div><div class="t" style="left:6.7px;top:230.68px;width:556.3px;height:1px;background:#dce7f8;"></div><div class="t" style="left:12.7px;top:236.18px;"><svg width="14" height="10" viewBox="0 0 14 10" style="display:block;flex:none;"><defs><clipPath id="fc20"><rect width="14" height="10" rx="1.3"/></clipPath></defs><g clip-path="url(#fc20)"><rect width="14" height="3.33" fill="#e1252c"/><rect y="3.33" width="14" height="3.34" fill="#fff"/><rect y="6.67" width="14" height="3.33" fill="#1b3f95"/><rect x="5.5" y="2.5" width="3" height="4" fill="#e1252c"/><rect x="6" y="3" width="1" height="1" fill="#fff"/><rect x="7" y="4" width="1" height="1" fill="#fff"/></g></svg></div><div class="t" style="left:34.1px;top:235.99px;font-size:9.5px;line-height:11.4px;color:#4a576b;">HRK</div><div class="t" style="left:-191.6px;width:400px;text-align:right;top:235.99px;font-size:9.5px;line-height:11.4px;color:#4a576b;">0,00</div><div class="t" style="left:-72px;width:400px;text-align:right;top:235.99px;font-size:9.5px;line-height:11.4px;color:#4a576b;">0,00</div><div class="t" style="left:47.8px;width:400px;text-align:right;top:235.99px;font-size:9.5px;line-height:11.4px;color:#4a576b;">0,00</div><div class="t" style="left:157.3px;width:400px;text-align:right;top:235.99px;font-size:9.5px;line-height:11.4px;color:#4a576b;">0,00</div><div class="t" style="left:6.7px;top:252.7px;width:556.3px;height:1px;background:#dce7f8;"></div><div class="t" style="left:12.7px;top:258.2px;"><svg width="14" height="10" viewBox="0 0 14 10" style="display:block;flex:none;"><defs><clipPath id="fc21"><rect width="14" height="10" rx="1.3"/></clipPath></defs><g clip-path="url(#fc21)"><rect width="14" height="3.33" fill="#d9262d"/><rect y="3.33" width="14" height="3.34" fill="#fff"/><rect y="6.67" width="14" height="3.33" fill="#3b8a3e"/></g><rect x=".25" y=".25" width="13.5" height="9.5" rx="1.2" fill="none" stroke="#d9e2ee" stroke-width=".5"/></svg></div><div class="t" style="left:34.1px;top:258.01px;font-size:9.5px;line-height:11.4px;color:#4a576b;">HUF</div><div class="t" style="left:-191.6px;width:400px;text-align:right;top:258.01px;font-size:9.5px;line-height:11.4px;color:#4a576b;">-15,00</div><div class="t" style="left:-72px;width:400px;text-align:right;top:258.01px;font-size:9.5px;line-height:11.4px;color:#4a576b;">-63 296,20</div><div class="t" style="left:47.8px;width:400px;text-align:right;top:258.01px;font-size:9.5px;line-height:11.4px;color:#4a576b;">-63 281,20</div><div class="t" style="left:157.3px;width:400px;text-align:right;top:258.01px;font-size:9.5px;line-height:11.4px;color:#4a576b;">0,00</div><div class="t" style="left:6.7px;top:274.72px;width:556.3px;height:1px;background:#dce7f8;"></div><div class="t" style="left:12.7px;top:280.22px;"><svg width="14" height="10" viewBox="0 0 14 10" style="display:block;flex:none;"><defs><clipPath id="fc22"><rect width="14" height="10" rx="1.3"/></clipPath></defs><g clip-path="url(#fc22)"><rect width="14" height="10" fill="#fff"/><circle cx="7" cy="5" r="2.9" fill="#d9262d"/></g><rect x=".25" y=".25" width="13.5" height="9.5" rx="1.2" fill="none" stroke="#d9e2ee" stroke-width=".5"/></svg></div><div class="t" style="left:34.1px;top:280.03px;font-size:9.5px;line-height:11.4px;color:#4a576b;">JPY</div><div class="t" style="left:-191.6px;width:400px;text-align:right;top:280.03px;font-size:9.5px;line-height:11.4px;color:#4a576b;">0,00</div><div class="t" style="left:-72px;width:400px;text-align:right;top:280.03px;font-size:9.5px;line-height:11.4px;color:#4a576b;">0,00</div><div class="t" style="left:47.8px;width:400px;text-align:right;top:280.03px;font-size:9.5px;line-height:11.4px;color:#4a576b;">0,00</div><div class="t" style="left:157.3px;width:400px;text-align:right;top:280.03px;font-size:9.5px;line-height:11.4px;color:#4a576b;">0,00</div><div class="t" style="left:6.7px;top:296.74px;width:556.3px;height:1px;background:#dce7f8;"></div><div class="t" style="left:12.7px;top:302.24px;"><svg width="14" height="10" viewBox="0 0 14 10" style="display:block;flex:none;"><defs><clipPath id="fc23"><rect width="14" height="10" rx="1.3"/></clipPath></defs><g clip-path="url(#fc23)"><rect width="14" height="10" fill="#e4434a"/><rect x="3.5" width="3" height="10" fill="#fff"/><rect y="3.5" width="14" height="3" fill="#fff"/><rect x="4.2" width="1.6" height="10" fill="#233c75"/><rect y="4.2" width="14" height="1.6" fill="#233c75"/></g></svg></div><div class="t" style="left:34.1px;top:302.05px;font-size:9.5px;line-height:11.4px;color:#4a576b;">NOK</div><div class="t" style="left:-191.6px;width:400px;text-align:right;top:302.05px;font-size:9.5px;line-height:11.4px;color:#4a576b;">0,00</div><div class="t" style="left:-72px;width:400px;text-align:right;top:302.05px;font-size:9.5px;line-height:11.4px;color:#4a576b;">0,00</div><div class="t" style="left:47.8px;width:400px;text-align:right;top:302.05px;font-size:9.5px;line-height:11.4px;color:#4a576b;">0,00</div><div class="t" style="left:157.3px;width:400px;text-align:right;top:302.05px;font-size:9.5px;line-height:11.4px;color:#4a576b;">0,00</div></div><div class="panel" style="left:6.8px;top:457.2px;width:568.2px;height:266.8px;"><div class="t" style="left:6.6px;top:6.8px;width:556.3px;height:22.6px;background:#eef3fd;border:1px solid #cfe0f8;border-radius:2px;"></div><div class="t" style="left:25.5px;top:7.8px;width:1px;height:20.6px;background:#d6e4f8;"></div><div class="t" style="left:133.8px;top:7.8px;width:1px;height:20.6px;background:#d6e4f8;"></div><div class="t" style="left:210.6px;top:7.8px;width:1px;height:20.6px;background:#d6e4f8;"></div><div class="t" style="left:273.9px;top:7.8px;width:1px;height:20.6px;background:#d6e4f8;"></div><div class="t" style="left:324.7px;top:7.8px;width:1px;height:20.6px;background:#d6e4f8;"></div><div class="t" style="left:388.6px;top:7.8px;width:1px;height:20.6px;background:#d6e4f8;"></div><div class="t" style="left:452.7px;top:7.8px;width:1px;height:20.6px;background:#d6e4f8;"></div><div class="t" style="left:503.7px;top:7.8px;width:1px;height:20.6px;background:#d6e4f8;"></div><div class="t" style="left:-185.4px;width:400px;text-align:center;top:12.21px;font-size:9.5px;line-height:11.4px;color:#4a576b;">*</div><div class="t" style="left:31px;top:12.21px;font-size:9.5px;line-height:11.4px;color:#4a576b;">Megbízás időpontja</div><div class="t" style="left:139.3px;top:12.21px;font-size:9.5px;line-height:11.4px;color:#4a576b;">Ügylet / Megr...</div><div class="t" style="left:216.1px;top:12.21px;font-size:9.5px;line-height:11.4px;color:#4a576b;">Összeg el...</div><div class="t" style="left:279.4px;top:12.21px;font-size:9.5px;line-height:11.4px;color:#4a576b;">Deviza ...</div><div class="t" style="left:-16.7px;width:400px;text-align:right;top:12.21px;font-size:9.5px;line-height:11.4px;color:#4a576b;">Árfolyam</div><div class="t" style="left:394.1px;top:12.21px;font-size:9.5px;line-height:11.4px;color:#4a576b;">Összeg vá...</div><div class="t" style="left:458.2px;top:12.21px;font-size:9.5px;line-height:11.4px;color:#4a576b;">Deviza ...</div><div class="t" style="left:509.2px;top:12.21px;font-size:9.5px;line-height:11.4px;color:#4a576b;">Vásárlás / ...</div><div class="t" style="left:6.6px;top:32.8px;width:556.3px;height:209.5px;overflow:hidden;"><div class="t" style="left:0px;top:0px;width:556.3px;height:36.4px;background:#e8e8e9;"></div><svg class="t" style="left:5.2px;top:14.4px" width="7.6" height="7.6"><circle cx="3.8" cy="3.8" r="3.3" fill="#7d7a7f"/></svg><div class="t" style="left:24.4px;top:12.81px;font-size:9.5px;line-height:11.4px;color:#4a576b;">2024.04.25. 12:12:53</div><div class="t" style="left:132.7px;top:12.81px;font-size:9.5px;line-height:11.4px;color:#4a576b;">Megrendelés</div><div class="t" style="left:-138px;width:400px;text-align:right;top:12.81px;font-size:9.5px;line-height:11.4px;color:#4a576b;">11 000,00</div><div class="t" style="left:272.8px;top:12.81px;font-size:9.5px;line-height:11.4px;color:#4a576b;">USD</div><div class="t" style="left:-23.3px;width:400px;text-align:right;top:12.81px;font-size:9.5px;line-height:11.4px;color:#4a576b;">26,500000</div><div class="t" style="left:40.8px;width:400px;text-align:right;top:12.81px;font-size:9.5px;line-height:11.4px;color:#4a576b;">291 500,00</div><div class="t" style="left:451.6px;top:12.81px;font-size:9.5px;line-height:11.4px;color:#4a576b;">CZK</div><div class="t" style="left:502.6px;top:12.81px;font-size:9.5px;line-height:11.4px;color:#4a576b;">Eladás</div><div class="t" style="left:0px;top:36.4px;width:556.3px;height:36px;background:#e8e8e9;"></div><div class="t" style="left:0px;top:35.9px;width:556.3px;height:1px;background:#dde7f6;"></div><svg class="t" style="left:5.2px;top:50.6px" width="7.6" height="7.6"><circle cx="3.8" cy="3.8" r="3.3" fill="#7d7a7f"/></svg><div class="t" style="left:24.4px;top:49.01px;font-size:9.5px;line-height:11.4px;color:#4a576b;">2024.04.23. 12:22:38</div><div class="t" style="left:132.7px;top:49.01px;font-size:9.5px;line-height:11.4px;color:#4a576b;">Megrendelés</div><div class="t" style="left:-138px;width:400px;text-align:right;top:49.01px;font-size:9.5px;line-height:11.4px;color:#4a576b;">22 237,00</div><div class="t" style="left:272.8px;top:49.01px;font-size:9.5px;line-height:11.4px;color:#4a576b;">CZK</div><div class="t" style="left:-23.3px;width:400px;text-align:right;top:49.01px;font-size:9.5px;line-height:11.4px;color:#4a576b;">22,237000</div><div class="t" style="left:40.8px;width:400px;text-align:right;top:49.01px;font-size:9.5px;line-height:11.4px;color:#4a576b;">1 000,00</div><div class="t" style="left:451.6px;top:49.01px;font-size:9.5px;line-height:11.4px;color:#4a576b;">EUR</div><div class="t" style="left:502.6px;top:49.01px;font-size:9.5px;line-height:11.4px;color:#4a576b;">Vásárlás</div><div class="t" style="left:0px;top:72.4px;width:556.3px;height:23px;background:#e9fbf1;"></div><div class="t" style="left:0px;top:71.9px;width:556.3px;height:1px;background:#dde7f6;"></div><svg class="t" style="left:5.2px;top:80.1px" width="7.6" height="7.6"><circle cx="3.8" cy="3.8" r="3.3" fill="#3fdc8f"/></svg><div class="t" style="left:24.4px;top:78.51px;font-size:9.5px;line-height:11.4px;color:#4a576b;">2024.04.22. 9:51:50</div><div class="t" style="left:132.7px;top:78.51px;font-size:9.5px;line-height:11.4px;color:#4a576b;">Devizaváltás</div><div class="t" style="left:-138px;width:400px;text-align:right;top:78.51px;font-size:9.5px;line-height:11.4px;color:#4a576b;">2 536,30</div><div class="t" style="left:272.8px;top:78.51px;font-size:9.5px;line-height:11.4px;color:#4a576b;">CZK</div><div class="t" style="left:-23.3px;width:400px;text-align:right;top:78.51px;font-size:9.5px;line-height:11.4px;color:#4a576b;">25,363000</div><div class="t" style="left:40.8px;width:400px;text-align:right;top:78.51px;font-size:9.5px;line-height:11.4px;color:#4a576b;">100,00</div><div class="t" style="left:451.6px;top:78.51px;font-size:9.5px;line-height:11.4px;color:#4a576b;">EUR</div><div class="t" style="left:502.6px;top:78.51px;font-size:9.5px;line-height:11.4px;color:#4a576b;">Vásárlás</div><div class="t" style="left:0px;top:95.4px;width:556.3px;height:36.4px;background:#e8e8e9;"></div><div class="t" style="left:0px;top:94.9px;width:556.3px;height:1px;background:#dde7f6;"></div><svg class="t" style="left:5.2px;top:108.7px" width="7.6" height="7.6"><circle cx="3.8" cy="3.8" r="3.3" fill="#7d7a7f"/></svg><div class="t" style="left:24.4px;top:107.11px;font-size:9.5px;line-height:11.4px;color:#4a576b;">2024.04.09. 9:55:37</div><div class="t" style="left:132.7px;top:107.11px;font-size:9.5px;line-height:11.4px;color:#4a576b;">Megrendelés</div><div class="t" style="left:-138px;width:400px;text-align:right;top:107.11px;font-size:9.5px;line-height:11.4px;color:#4a576b;">10 000,00</div><div class="t" style="left:272.8px;top:107.11px;font-size:9.5px;line-height:11.4px;color:#4a576b;">EUR</div><div class="t" style="left:-23.3px;width:400px;text-align:right;top:107.11px;font-size:9.5px;line-height:11.4px;color:#4a576b;">15,290000</div><div class="t" style="left:40.8px;width:400px;text-align:right;top:107.11px;font-size:9.5px;line-height:11.4px;color:#4a576b;">152 900,00</div><div class="t" style="left:451.6px;top:107.11px;font-size:9.5px;line-height:11.4px;color:#4a576b;">CZK</div><div class="t" style="left:502.6px;top:107.11px;font-size:9.5px;line-height:11.4px;color:#4a576b;">Eladás</div><div class="t" style="left:0px;top:131.8px;width:556.3px;height:36px;background:#e8e8e9;"></div><div class="t" style="left:0px;top:131.3px;width:556.3px;height:1px;background:#dde7f6;"></div><svg class="t" style="left:5.2px;top:144.9px" width="7.6" height="7.6"><circle cx="3.8" cy="3.8" r="3.3" fill="#7d7a7f"/></svg><div class="t" style="left:24.4px;top:143.31px;font-size:9.5px;line-height:11.4px;color:#4a576b;">2024.04.03. 14:48:32</div><div class="t" style="left:132.7px;top:143.31px;font-size:9.5px;line-height:11.4px;color:#4a576b;">Megrendelés</div><div class="t" style="left:-138px;width:400px;text-align:right;top:143.31px;font-size:9.5px;line-height:11.4px;color:#4a576b;">100,00</div><div class="t" style="left:272.8px;top:143.31px;font-size:9.5px;line-height:11.4px;color:#4a576b;">EUR</div><div class="t" style="left:-23.3px;width:400px;text-align:right;top:143.31px;font-size:9.5px;line-height:11.4px;color:#4a576b;">29,000000</div><div class="t" style="left:40.8px;width:400px;text-align:right;top:143.31px;font-size:9.5px;line-height:11.4px;color:#4a576b;">2 900,00</div><div class="t" style="left:451.6px;top:143.31px;font-size:9.5px;line-height:11.4px;color:#4a576b;">CZK</div><div class="t" style="left:502.6px;top:143.31px;font-size:9.5px;line-height:11.4px;color:#4a576b;">Eladás</div><div class="t" style="left:0px;top:167.8px;width:556.3px;height:36.7px;background:#e8e8e9;"></div><div class="t" style="left:0px;top:167.3px;width:556.3px;height:1px;background:#dde7f6;"></div><svg class="t" style="left:5.2px;top:181.25px" width="7.6" height="7.6"><circle cx="3.8" cy="3.8" r="3.3" fill="#7d7a7f"/></svg><div class="t" style="left:24.4px;top:179.66px;font-size:9.5px;line-height:11.4px;color:#4a576b;">2024.03.22. 15:05:54</div><div class="t" style="left:132.7px;top:179.66px;font-size:9.5px;line-height:11.4px;color:#4a576b;">Megrendelés</div><div class="t" style="left:-138px;width:400px;text-align:right;top:179.66px;font-size:9.5px;line-height:11.4px;color:#4a576b;">23 000,00</div><div class="t" style="left:272.8px;top:179.66px;font-size:9.5px;line-height:11.4px;color:#4a576b;">CZK</div><div class="t" style="left:-23.3px;width:400px;text-align:right;top:179.66px;font-size:9.5px;line-height:11.4px;color:#4a576b;">23,000000</div><div class="t" style="left:40.8px;width:400px;text-align:right;top:179.66px;font-size:9.5px;line-height:11.4px;color:#4a576b;">1 000,00</div><div class="t" style="left:451.6px;top:179.66px;font-size:9.5px;line-height:11.4px;color:#4a576b;">USD</div><div class="t" style="left:502.6px;top:179.66px;font-size:9.5px;line-height:11.4px;color:#4a576b;">Vásárlás</div><div class="t" style="left:0px;top:204.5px;width:556.3px;height:36px;background:#e8e8e9;"></div><div class="t" style="left:0px;top:204px;width:556.3px;height:1px;background:#dde7f6;"></div><div class="t" style="left:24.4px;top:217.11px;font-size:9.5px;line-height:11.4px;color:#4a576b;"></div><div class="t" style="left:132.7px;top:217.11px;font-size:9.5px;line-height:11.4px;color:#4a576b;"></div><div class="t" style="left:-138px;width:400px;text-align:right;top:217.11px;font-size:9.5px;line-height:11.4px;color:#4a576b;"></div><div class="t" style="left:272.8px;top:217.11px;font-size:9.5px;line-height:11.4px;color:#4a576b;"></div><div class="t" style="left:-23.3px;width:400px;text-align:right;top:217.11px;font-size:9.5px;line-height:11.4px;color:#4a576b;"></div><div class="t" style="left:40.8px;width:400px;text-align:right;top:217.11px;font-size:9.5px;line-height:11.4px;color:#4a576b;"></div><div class="t" style="left:451.6px;top:217.11px;font-size:9.5px;line-height:11.4px;color:#4a576b;"></div><div class="t" style="left:502.6px;top:217.11px;font-size:9.5px;line-height:11.4px;color:#4a576b;"></div></div><svg class="t" style="left:12.7px;top:251.7px" width="7.6" height="7.6"><circle cx="3.8" cy="3.8" r="3.3" fill="#0a2a8c"/></svg><div class="t" style="left:22.9px;top:252.14px;font-size:8.1px;line-height:9.72px;color:#4e596b;">Elszámolt tranzakció</div><svg class="t" style="left:109.8px;top:251.7px" width="7.6" height="7.6"><circle cx="3.8" cy="3.8" r="3.3" fill="#43dd95"/></svg><div class="t" style="left:120px;top:252.14px;font-size:8.1px;line-height:9.72px;color:#4e596b;">Regisztrált tranzakció</div><svg class="t" style="left:210.9px;top:251.7px" width="7.6" height="7.6"><circle cx="3.8" cy="3.8" r="3.3" fill="#e5262c"/></svg><div class="t" style="left:221.1px;top:252.14px;font-size:8.1px;line-height:9.72px;color:#4e596b;">Törölt tranzakció</div><svg class="t" style="left:293.8px;top:251.7px" width="7.6" height="7.6"><circle cx="3.8" cy="3.8" r="3.3" fill="#7f7b80"/></svg><div class="t" style="left:304px;top:252.14px;font-size:8.1px;line-height:9.72px;color:#4e596b;">Lejárt tranzakció</div></div><div class="panel" style="left:585.2px;top:457.2px;width:569.5px;height:266.8px;"><div class="t" style="left:6.8px;top:7px;width:556.3px;height:22.5px;background:#eef3fd;border:1px solid #cfe0f8;border-radius:2px;"></div><div class="t" style="left:25.2px;top:8px;width:1px;height:20.5px;background:#d6e4f8;"></div><div class="t" style="left:133.3px;top:8px;width:1px;height:20.5px;background:#d6e4f8;"></div><div class="t" style="left:-184.9px;width:400px;text-align:center;top:12.41px;font-size:9.5px;line-height:11.4px;color:#4a576b;">*</div><div class="t" style="left:31.4px;top:12.41px;font-size:9.5px;line-height:11.4px;color:#4a576b;">Nap</div><div class="t" style="left:139.5px;top:12.41px;font-size:9.5px;line-height:11.4px;color:#4a576b;">Információk</div><div class="t" style="left:6.8px;top:33.4px;width:556.3px;height:208.4px;overflow:hidden;"><div class="t" style="left:0px;top:0.5px;width:556.3px;height:35.1px;background:#fffbe7;"></div><svg class="t" style="left:5.55px;top:14.05px" width="7.5" height="7.5"><circle cx="3.75" cy="3.75" r="3.25" fill="#ffd200"/></svg><div class="t" style="left:24.8px;top:12.41px;font-size:9.5px;line-height:11.4px;color:#4a576b;letter-spacing:0.05px;">2024.05.03. 9:46:49</div><div class="t" style="left:132.7px;top:5.26px;font-size:9.5px;line-height:11.4px;color:#4a576b;">V současné době není dostatek prostředků na IPÚ k pokrytí odchozí platby. Platba je zaevidována.</div><div class="t" style="left:132.7px;top:18.96px;font-size:9.5px;line-height:11.4px;color:#4a576b;">Pro úspěšné provedení platby doplňte prostředky na IPÚ.</div><div class="t" style="left:0px;top:35.6px;width:556.3px;height:22px;background:#ffffff;"></div><div class="t" style="left:0px;top:35.1px;width:556.3px;height:1px;background:#dce7f8;"></div><svg class="t" style="left:5.55px;top:42.85px" width="7.5" height="7.5"><circle cx="3.75" cy="3.75" r="3.25" fill="#3fdc8f"/></svg><div class="t" style="left:24.8px;top:41.21px;font-size:9.5px;line-height:11.4px;color:#4a576b;letter-spacing:0.05px;">2024.05.03. 9:46:49</div><div class="t" style="left:132.7px;top:40.91px;font-size:9.5px;line-height:11.4px;color:#4a576b;">Příkaz k úhradě přijat.</div><div class="t" style="left:0px;top:57.6px;width:556.3px;height:51px;background:#fffbe7;"></div><div class="t" style="left:0px;top:57.1px;width:556.3px;height:1px;background:#dce7f8;"></div><svg class="t" style="left:5.55px;top:79.35px" width="7.5" height="7.5"><circle cx="3.75" cy="3.75" r="3.25" fill="#ffd200"/></svg><div class="t" style="left:24.8px;top:77.71px;font-size:9.5px;line-height:11.4px;color:#4a576b;letter-spacing:0.05px;">2024.04.30. 10:15:18</div><div class="t" style="left:132.7px;top:62.61px;font-size:9.5px;line-height:11.4px;color:#4a576b;">În prezent, suma fondurilor de pe IPA nu este suficientă pentru a acoperi toate tranzac?iile de</div><div class="t" style="left:132.7px;top:76.71px;font-size:9.5px;line-height:11.4px;color:#4a576b;">debit; se înregistrează comenzi. Pentru finalizarea cu succes a ordinelor de plată, vă rugăm să</div><div class="t" style="left:132.7px;top:90.81px;font-size:9.5px;line-height:11.4px;color:#4a576b;">reaproviziona?i fondurile de pe IPA.</div><div class="t" style="left:0px;top:108.6px;width:556.3px;height:22px;background:#ffffff;"></div><div class="t" style="left:0px;top:108.1px;width:556.3px;height:1px;background:#dce7f8;"></div><svg class="t" style="left:5.55px;top:115.85px" width="7.5" height="7.5"><circle cx="3.75" cy="3.75" r="3.25" fill="#3fdc8f"/></svg><div class="t" style="left:24.8px;top:114.21px;font-size:9.5px;line-height:11.4px;color:#4a576b;letter-spacing:0.05px;">2024.04.30. 10:15:18</div><div class="t" style="left:132.7px;top:113.91px;font-size:9.5px;line-height:11.4px;color:#4a576b;">Ordinul de plată a fost primit.</div><div class="t" style="left:0px;top:130.6px;width:556.3px;height:22.2px;background:#ffffff;"></div><div class="t" style="left:0px;top:130.1px;width:556.3px;height:1px;background:#dce7f8;"></div><svg class="t" style="left:5.55px;top:137.95px" width="7.5" height="7.5"><circle cx="3.75" cy="3.75" r="3.25" fill="#3fdc8f"/></svg><div class="t" style="left:24.8px;top:136.31px;font-size:9.5px;line-height:11.4px;color:#4a576b;letter-spacing:0.05px;">2024.04.25. 12:29:13</div><div class="t" style="left:132.7px;top:136.01px;font-size:9.5px;line-height:11.4px;color:#4a576b;">Partner banki kapcsolata mentésre került.</div><div class="t" style="left:0px;top:152.8px;width:556.3px;height:21.8px;background:#ffffff;"></div><div class="t" style="left:0px;top:152.3px;width:556.3px;height:1px;background:#dce7f8;"></div><svg class="t" style="left:5.55px;top:159.95px" width="7.5" height="7.5"><circle cx="3.75" cy="3.75" r="3.25" fill="#3fdc8f"/></svg><div class="t" style="left:24.8px;top:158.31px;font-size:9.5px;line-height:11.4px;color:#4a576b;letter-spacing:0.05px;">2024.04.25. 12:12:54</div><div class="t" style="left:132.7px;top:158.01px;font-size:9.5px;line-height:11.4px;color:#4a576b;">Objednávka byla přijata.</div><div class="t" style="left:0px;top:174.6px;width:556.3px;height:22px;background:#ffffff;"></div><div class="t" style="left:0px;top:174.1px;width:556.3px;height:1px;background:#dce7f8;"></div><svg class="t" style="left:5.55px;top:181.85px" width="7.5" height="7.5"><circle cx="3.75" cy="3.75" r="3.25" fill="#3fdc8f"/></svg><div class="t" style="left:24.8px;top:180.21px;font-size:9.5px;line-height:11.4px;color:#4a576b;letter-spacing:0.05px;">2024.04.23. 12:22:39</div><div class="t" style="left:132.7px;top:179.91px;font-size:9.5px;line-height:11.4px;color:#4a576b;">Objednávka byla přijata.</div><div class="t" style="left:0px;top:196.6px;width:556.3px;height:22px;background:#ffffff;"></div><div class="t" style="left:0px;top:196.1px;width:556.3px;height:1px;background:#dce7f8;"></div><svg class="t" style="left:5.55px;top:203.85px" width="7.5" height="7.5"><circle cx="3.75" cy="3.75" r="3.25" fill="#3fdc8f"/></svg><div class="t" style="left:24.8px;top:202.21px;font-size:9.5px;line-height:11.4px;color:#4a576b;letter-spacing:0.05px;">2024.04.22. 9:51:51</div><div class="t" style="left:132.7px;top:201.91px;font-size:9.5px;line-height:11.4px;color:#4a576b;">Obchod byl úspěšně uzavřen s kurzem 25,363</div><div class="t" style="left:0px;top:0px;width:556.3px;height:1px;border-top:1px dashed #cfdbec;"></div></div><svg class="t" style="left:13px;top:251.8px" width="7.4" height="7.4"><circle cx="3.7" cy="3.7" r="3.2" fill="#43dd95"/></svg><div class="t" style="left:22.9px;top:252.14px;font-size:8.1px;line-height:9.72px;color:#4e596b;">Rendszeres üzenet</div><svg class="t" style="left:104.6px;top:251.8px" width="7.4" height="7.4"><circle cx="3.7" cy="3.7" r="3.2" fill="#ffd200"/></svg><div class="t" style="left:114.5px;top:252.14px;font-size:8.1px;line-height:9.72px;color:#4e596b;">Figyelmeztetés</div><svg class="t" style="left:182.4px;top:251.8px" width="7.4" height="7.4"><circle cx="3.7" cy="3.7" r="3.2" fill="#e5262c"/></svg><div class="t" style="left:192.3px;top:252.14px;font-size:8.1px;line-height:9.72px;color:#4e596b;">Fontos információ</div></div></div></body></html>
